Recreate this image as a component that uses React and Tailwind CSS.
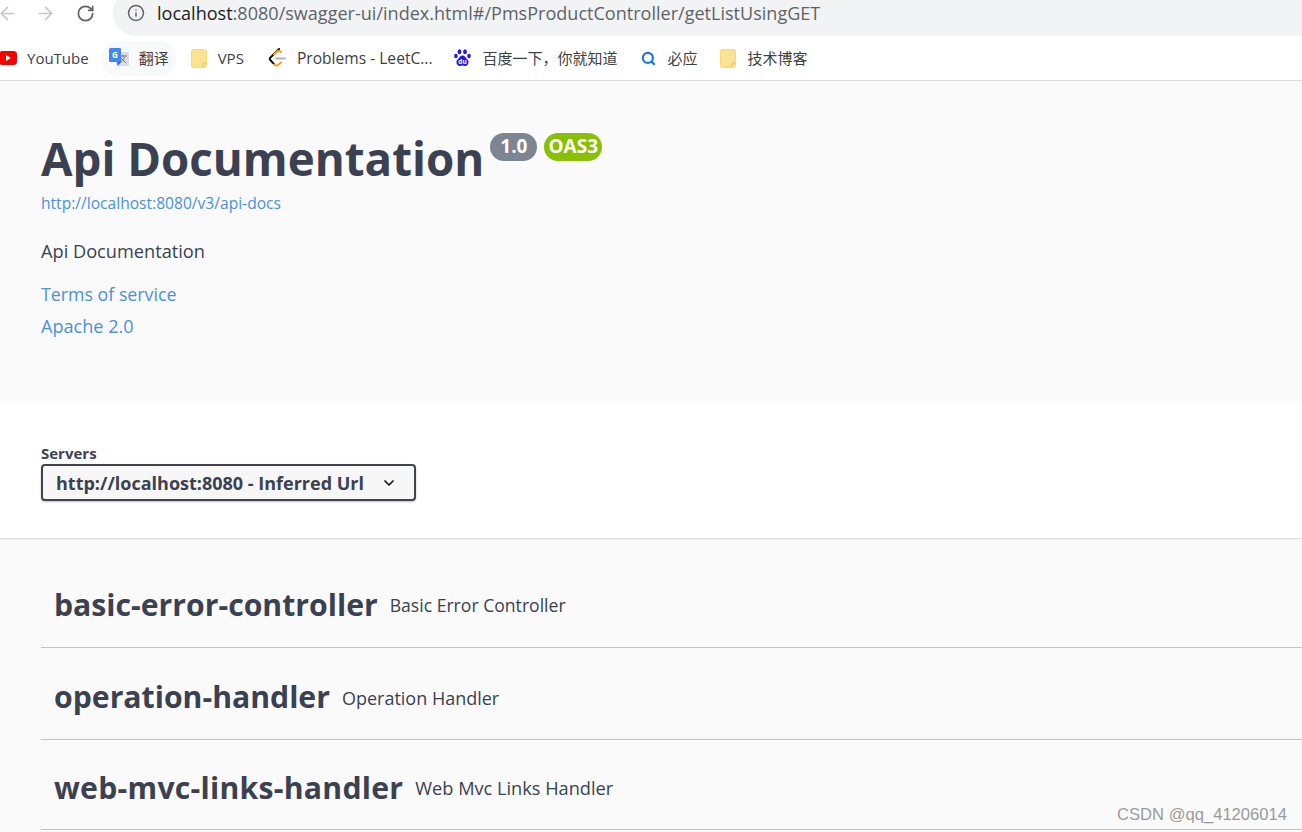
import React from 'react';
import { ArrowLeft, ArrowRight, RotateCw, Info, Search, ChevronDown } from 'lucide-react';

const sans = 'font-["Open_Sans","Noto_Sans_CJK_SC",sans-serif]';

function Folder() {
  return (
    <svg width="16" height="19" viewBox="0 0 16 19" className="shrink-0">
      <rect x="0.5" y="0.5" width="15" height="18" rx="2" fill="#fde293" stroke="#f8d775" />
      <path d="M12 18v-3a1 1 0 0 1 1-1h2.500" fill="none" stroke="#eebf4d" />
    </svg>
  );
}

function YouTubeIcon() {
  return (
    <svg width="18" height="14" viewBox="0 0 18 14" className="shrink-0">
      <rect width="18" height="14" rx="3.500" fill="#f40000" />
      <path d="M7 4l5 3-5 3z" fill="#fff" />
    </svg>
  );
}

function TranslateIcon() {
  return (
    <svg width="20" height="20" viewBox="0 0 20 20" className="shrink-0">
      <rect x="7" y="4" width="13" height="14" rx="1.500" fill="#dadce0" />
      <path d="M10 8h8M14 7v2M11 15l5-6M12 10l5 5" stroke="#70757a" strokeWidth="1" fill="none" />
      <path d="M1.500 0h9.500a1 1 0 0 1 1 1v13H1.500a1.500 1.500 0 0 1-1.500-1.500V1.500A1.500 1.500 0 0 1 1.500 0z" fill="#4285f4" />
      <path d="M8 14h4l-3 4z" fill="#3367d6" />
      <text x="6" y="10" fontSize="8" fontWeight="700" fill="#fff" textAnchor="middle" fontFamily="Open Sans">G</text>
    </svg>
  );
}

function LeetCodeIcon() {
  return (
    <svg width="18" height="20" viewBox="0 0 18 20" className="shrink-0">
      <path d="M11 1L2.500 9.500a2 2 0 0 0 0 2.800L6 16" fill="none" stroke="#111" strokeWidth="2" strokeLinecap="round" />
      <path d="M6 16.500a3 3 0 0 0 4.500 0l2.500-2" fill="none" stroke="#f89f1b" strokeWidth="2" strokeLinecap="round" />
      <path d="M6 6.500l2.500-2.500a3 3 0 0 1 4.500 0" fill="none" stroke="#f89f1b" strokeWidth="2" strokeLinecap="round" />
      <path d="M8 10.500h9" stroke="#b3b3b3" strokeWidth="2" strokeLinecap="round" />
    </svg>
  );
}

function BaiduIcon() {
  return (
    <svg width="17" height="18" viewBox="0 0 17 18" className="shrink-0">
      <ellipse cx="5.500" cy="2.800" rx="1.900" ry="2.500" fill="#2319dc" />
      <ellipse cx="11" cy="2.800" rx="1.900" ry="2.500" fill="#2319dc" />
      <ellipse cx="1.900" cy="7" rx="1.800" ry="2.300" fill="#2319dc" />
      <ellipse cx="15" cy="7" rx="1.800" ry="2.300" fill="#2319dc" />
      <path d="M8.500 6.500c2.500 0 3 2.500 5 4 2 2 1 6-2 6.500-1.500.2-2-.4-3-.4s-1.500.6-3 .4c-3-.5-4-4.500-2-6.500 2-1.500 2.500-4 5-4z" fill="#2319dc" />
      <text x="8.500" y="15" fontSize="6.500" fontWeight="700" fill="#fff" textAnchor="middle" fontFamily="Open Sans">du</text>
    </svg>
  );
}

function Bookmark({ icon, label, className = '', textClass = 'text-[15px]' }) {
  return (
    <div className={`flex items-center shrink-0 ${className}`}>
      {icon}
      <span className={`leading-none text-[#3c4043] ${textClass}`}>{label}</span>
    </div>
  );
}

function TagRow({ name, desc, className, nameClass = '', descClass = 'text-[18px]' }) {
  return (
    <div className={`flex items-center border-b border-[#bfc2c7] pl-[13px] pt-[8px] ${className}`}>
      <span className={`text-[30.200px] leading-none font-bold text-[#3b4151] ${nameClass}`}>{name}</span>
      <span className={`ml-[12px] leading-none text-[#3b4151] ${descClass}`}>{desc}</span>
    </div>
  );
}

export default function App() {
  return (
    <div className={`relative h-[832px] w-[1302px] overflow-hidden bg-white ${sans}`}>
      {/* browser toolbar */}
      <div className="flex h-9 items-start">
        <ArrowLeft className="ml-[-3px] mt-[3px] h-[21px] w-[21px] text-[#c4c6c9]" strokeWidth={1.800} />
        <ArrowRight className="ml-[17px] mt-[3px] h-[21px] w-[21px] text-[#c4c6c9]" strokeWidth={1.800} />
        <RotateCw className="ml-[20px] mt-[4px] h-[19px] w-[19px] text-[#5f6368]" strokeWidth={2.200} />
        <div className="ml-[18px] -mt-[10px] flex h-[46px] flex-1 items-center rounded-l-[23px] bg-[#f1f3f4]">
          <Info className="ml-[14px] h-[18px] w-[18px] text-[#5f6368]" strokeWidth={2} />
          <span className="ml-[12px] text-[18.060px] leading-none text-[#202124]">
            localhost<span className="text-[#5f6368]">:8080/swagger-ui/index.html#/PmsProductController/getListUsingGET</span>
          </span>
        </div>
      </div>

      {/* bookmarks */}
      <div className="flex h-[45px] items-center border-b border-[#dcdcdc]">
        <Bookmark className="ml-[-1px]" icon={<YouTubeIcon />} label={<span className="ml-[10px]">YouTube</span>} />
        <div className="ml-[12px] flex h-[35px] w-[75px] items-center rounded-full bg-[#f8f9fa] pl-[8px]">
          <TranslateIcon />
          <span className="ml-[10px] text-[15px] leading-none text-[#3c4043]">翻译</span>
        </div>
        <Bookmark className="ml-[15px]" icon={<Folder />} label={<span className="ml-[11px]">VPS</span>} />
        <Bookmark className="ml-[24px]" textClass="pt-[2px] text-[15.600px]" icon={<LeetCodeIcon />} label={<span className="ml-[11px]">Problems - LeetC...</span>} />
        <Bookmark className="ml-[21px]" icon={<BaiduIcon />} label={<span className="ml-[12px]">百度一下，你就知道</span>} />
        <Bookmark className="ml-[23px]" icon={<Search className="h-[15px] w-[15px] text-[#1a73e8]" strokeWidth={3.500} />} label={<span className="ml-[12px]">必应</span>} />
        <Bookmark className="ml-[22px]" icon={<Folder />} label={<span className="ml-[12px]">技术博客</span>} />
      </div>

      {/* info */}
      <div className="h-[320px] bg-[#fafafa] pl-[41px] pt-[46px]">
        <div className="flex items-start">
          <h1 className="text-[45.700px] leading-[62px] font-bold text-[#3b4151]">Api Documentation</h1>
          <span className="ml-[6px] mt-[6px] flex h-[28px] items-center rounded-[14px] bg-[#7d8492] px-[10px] pb-[2px] text-[19px] font-bold text-white">1.0</span>
          <span className="ml-[7px] mt-[6px] flex h-[28px] items-center rounded-[14px] bg-[#89bf04] px-[4px] pb-[2px] text-[19px] font-bold text-white">OAS3</span>
        </div>
        <a className="mt-[4px] block text-[15.600px] leading-5 text-[#4990e2]">http://localhost:8080/v3/api-docs</a>
        <p className="mt-[26px] text-[18.200px] leading-6 text-[#3b4151]">Api Documentation</p>
        <a className="mt-[19px] block text-[17.800px] leading-6 text-[#4990e2]">Terms of service</a>
        <a className="mt-[8px] block text-[18.100px] leading-6 text-[#4990e2]">Apache 2.0</a>
      </div>

      {/* servers */}
      <div className="relative h-[137px] bg-white pl-[41px] pt-[43px] shadow-[0_1px_2px_rgba(0,0,0,0.15)]">
        <div className="mb-px text-[15px] leading-[19px] font-bold text-[#3b4151]">Servers</div>
        <div className="flex h-[37px] w-[375px] items-center rounded-[4px] border-2 border-[#41444e] bg-[#f7f7f7] pl-[13px] shadow-[0_1px_2px_rgba(0,0,0,0.25)]">
          <span className="text-[18px] leading-none font-bold text-[#3b4151]">http://localhost:8080 - Inferred Url</span>
          <ChevronDown className="ml-[17px] h-[16px] w-[16px] text-[#111]" strokeWidth={2.500} />
        </div>
      </div>

      {/* tags */}
      <div className="h-[300px] bg-[#fafafa] pl-[41px] pt-[18px]">
        <TagRow name="basic-error-controller" desc="Basic Error Controller" className="h-[92px]" descClass="text-[17.600px]" />
        <TagRow name="operation-handler" desc="Operation Handler" className="h-[92px]" />
        <TagRow name="web-mvc-links-handler" desc="Web Mvc Links Handler" className="h-[90px]" nameClass="tracking-[0.25px]" descClass="text-[18.200px]" />
      </div>

      <span className="absolute left-[1117px] top-[806px] font-['Liberation_Sans',sans-serif] text-[16.600px] leading-[18px] text-[#9a9a9a]">CSDN @qq_41206014</span>
    </div>
  );
}
